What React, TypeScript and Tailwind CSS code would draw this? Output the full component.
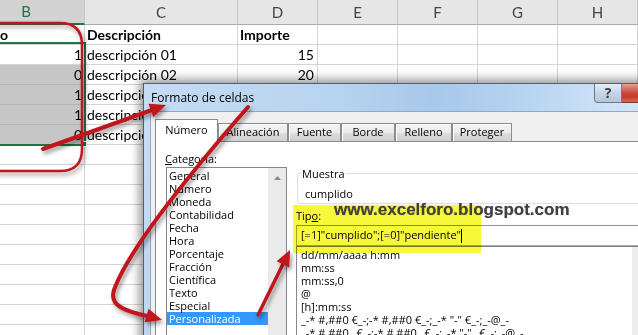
import React from 'react';

const cols = [
  { key: 'B', w: 'w-[117px]' },
  { key: 'C', w: 'w-[153px]' },
  { key: 'D', w: 'w-[80px]' },
  { key: 'E', w: 'w-[80px]' },
  { key: 'F', w: 'w-[80px]' },
  { key: 'G', w: 'w-[80px]' },
  { key: 'H', w: 'w-[80px]' },
  { key: 'I', w: 'w-[80px]' },
];

const rows = [
  { b: 'Cumplido', c: 'Descripción', d: 'Importe', bold: true },
  { b: '1', c: 'descripción 01', d: '15' },
  { b: '0', c: 'descripción 02', d: '20', sel: true },
  { b: '1', c: 'descripción 03', d: '25', sel: true },
  { b: '1', c: 'descripción 04', d: '30', sel: true },
  { b: '0', c: 'descripción 05', d: '35', sel: true },
  ...Array.from({ length: 10 }, () => ({ b: '', c: '', d: '' })),
];

const categories = [
  'General', 'Número', 'Moneda', 'Contabilidad', 'Fecha', 'Hora',
  'Porcentaje', 'Fracción', 'Científica', 'Texto', 'Especial', 'Personalizada',
];

const formats = [
  'dd/mm/aaaa h:mm',
  'mm:ss',
  'mm:ss,0',
  '@',
  '[h]:mm:ss',
  '_-* #,##0 €_-;-* #,##0 €_-;_-* "-" €_-;_-@_-',
  '_-* #,##0 _€_-;-* #,##0 _€_-;_-* "-" _€_-;_-@_-',
];

const tabs = [
  { label: 'Alineación', w: 'w-[70px]' },
  { label: 'Fuente', w: 'w-[53px]' },
  { label: 'Borde', w: 'w-[54px]' },
  { label: 'Relleno', w: 'w-[57px]' },
  { label: 'Proteger', w: 'w-[60px]' },
];

function Sheet() {
  return (
    <div className="ml-[-32px] font-['Lato',sans-serif] text-[14px] text-black">
      {/* column headers */}
      <div className="flex text-[15px]">
        {cols.map((c) => (
          <div
            key={c.key}
            className={`${c.w} shrink-0 h-[25px] flex items-center justify-center border-r border-[#c8c8c8] ${
              c.key === 'B'
                ? 'bg-[#d2d2d2] text-[#217346] border-b-2 border-b-[#217346]'
                : 'bg-[#e6e6e6] text-[#444] border-b border-b-[#ababab]'
            }`}
          >
            {c.key}
          </div>
        ))}
      </div>
      {rows.map((r, i) => (
        <div key={i} className="flex">
          <div
            className={`w-[117px] shrink-0 h-[20px] flex items-center justify-end border-r border-b ${
              r.sel ? 'bg-[#c6c6c6] border-[#b4b4b4]' : 'border-[#d4d4d4]'
            } ${r.bold ? 'font-bold pr-[76px]' : 'pr-[2px]'}`}
          >
            <span className="whitespace-nowrap">{r.b}</span>
          </div>
          <div className={`w-[153px] shrink-0 h-[20px] flex items-center pl-[2px] border-r border-b border-[#d4d4d4] ${r.bold ? 'font-bold' : ''}`}>
            {r.c}
          </div>
          <div
            className={`w-[80px] shrink-0 h-[20px] flex items-center border-r border-b border-[#d4d4d4] ${
              r.bold ? 'font-bold pl-[2px]' : 'justify-end pr-[3px]'
            }`}
          >
            {r.d}
          </div>
          {['E', 'F', 'G', 'H', 'I'].map((k) => (
            <div key={k} className="w-[80px] shrink-0 h-[20px] border-r border-b border-[#d4d4d4]" />
          ))}
        </div>
      ))}
    </div>
  );
}

function Dialog() {
  return (
    <div className="absolute left-[143px] top-[83px] z-10 w-[530px] h-[290px] border border-[#4f6072] bg-[linear-gradient(180deg,#c9def4,#bcd4ee)] shadow-[0_0_10px_3px_rgba(0,0,0,0.45)] font-['Open_Sans',sans-serif] text-[11px] text-black">
      {/* title bar */}
      <div className="h-[27px] flex bg-[linear-gradient(90deg,#c4dcf4_0%,#b9d4ef_35%,#a8c8ea_55%,#b5d2f0_70%,#cfe3f8_90%,#d8e9f9_100%)]">
        <div className="pl-[7px] flex items-center text-[12px]">Formato de celdas</div>
        <div className="ml-[340px] flex self-start">
          <div className="w-[28px] h-[19px] flex items-center justify-center rounded-bl-[4px] border border-t-0 border-[#6b7c8f] bg-[linear-gradient(180deg,#e6eef7,#c6d5e6_50%,#b4c6da)] text-[14px] font-bold text-[#3a3a3a] leading-none">
            ?
          </div>
          <div className="w-[44px] h-[19px] flex items-center justify-center border border-t-0 border-l-0 border-[#6b3a32] bg-[linear-gradient(180deg,#e4a08f,#c9493a_50%,#c53b2a_70%,#d86a52)] text-white text-[13px] font-bold">
            ✕
          </div>
        </div>
      </div>
      {/* body */}
      <div className="ml-[6px] h-full border-l border-t border-[#94a8bd] bg-[#f0f0f0] pl-[4px] pt-[7px]">
        <div className="flex items-end h-[22px]">
          <div className="w-[63px] h-[23px] mb-[-1px] relative z-10 flex items-center justify-center bg-white border border-b-0 border-[#898c95] pb-[2px]">
            Número
          </div>
          {tabs.map((t) => (
            <div
              key={t.label}
              className={`${t.w} h-[18px] flex items-center justify-center border border-b-0 border-[#898c95] bg-[linear-gradient(180deg,#f4f4f4,#ebebeb_50%,#dddddd_51%,#cfcfcf)] shadow-[inset_1px_1px_0_#ffffff]`}
            >
              {t.label}
            </div>
          ))}
        </div>
        <div className="h-full border-t border-l border-[#898c95] bg-white flex pl-[9px] pt-[9px]">
          {/* category column */}
          <div className="flex flex-col w-[122px] shrink-0">
            <div className="h-[15px] leading-[15px]">
              <span className="underline">C</span>ategoría:
            </div>
            <div className="mt-[1px] ml-[1px] w-[121px] h-[200px] border border-[#828790] flex">
              <div className="w-[101px] pt-[1px]">
                {categories.map((c) => (
                  <div
                    key={c}
                    className={`h-[13px] leading-[13px] pl-[2px] ${c === 'Personalizada' ? 'bg-[#3399ff] text-white' : ''}`}
                  >
                    {c}
                  </div>
                ))}
              </div>
              <div className="w-[18px] bg-[#eaeaea] flex justify-center pt-[8px]">
                <svg width="7" height="4" viewBox="0 0 7 4">
                  <path d="M0 4 L3.5 0 L7 4 Z" fill="#8a8a8a" />
                </svg>
              </div>
            </div>
          </div>
          {/* right column */}
          <div className="ml-[9px] w-[360px] flex flex-col pt-[15px]">
            <fieldset className="ml-[1px] border border-[#d5dfe5] rounded-[3px] pl-[7px] pt-[5px] pb-[2px]">
              <legend className="ml-[-4px] px-[1px] h-[15px] leading-[15px]">Muestra</legend>
              <div className="h-[15px] leading-[15px]">cumplido</div>
            </fieldset>
            <div className="mt-[4px] h-[15px] leading-[15px]">
              Tip<span className="underline">o</span>:
            </div>
            <div className="mt-[2px] h-[21px] border border-[#abadb3] border-t-[#8e9199] bg-white flex items-center pl-[4px]">
              <span>[=1]"cumplido";[=0]"pendiente"</span>
              <span className="w-[1px] h-[14px] bg-black" />
            </div>
            <div className="h-[120px] border border-[#828790] border-t-[#7a7d85] bg-white flex">
              <div className="w-[335px] pl-[4px] pt-[1px]">
                {formats.map((f) => (
                  <div key={f} className="h-[13px] leading-[13px] whitespace-nowrap">
                    {f}
                  </div>
                ))}
              </div>
              <div className="w-[18px] bg-[#ededed]" />
            </div>
          </div>
        </div>
      </div>
    </div>
  );
}

function Arrows() {
  return (
    <svg className="absolute inset-0 z-40 pointer-events-none" width="638" height="335" viewBox="0 0 638 335">
      <defs>
        <filter id="sh" x="-20%" y="-20%" width="140%" height="140%">
          <feDropShadow dx="2" dy="3" stdDeviation="2" floodColor="#000" floodOpacity="0.4" />
        </filter>
      </defs>
      <g filter="url(#sh)" fill="none" stroke="#c0141c" strokeLinecap="round">
        {/* rounded frame around column B */}
        <path d="M-5 23 L60 23 Q82 23 82 45 L82 149 Q82 171 60 171 L-5 171" strokeWidth="2.5" />
        {/* arrow to title */}
        <path d="M43 149 L152 110" strokeWidth="4" />
        {/* curved arrow to Personalizada */}
        <path d="M248 107 C200 162 130 245 114 290 C109 305 124 311 147 316" strokeWidth="4" />
        {/* arrow to Tipo */}
        <path d="M258 315 L283 264" strokeWidth="3.5" />
      </g>
      <g filter="url(#sh)" fill="#c0141c">
        <path d="M166 105 L153.3 117 L148.5 103.8 Z" />
        <path d="M162 320 L144.6 322.2 L148.6 308.8 Z" />
        <path d="M290 250 L289.2 267.5 L276.6 261.3 Z" />
      </g>
    </svg>
  );
}

export default function App() {
  return (
    <div className="relative w-[638px] h-[335px] overflow-hidden bg-white isolate">
      <Sheet />
      {/* selection frame on column B */}
      <div className="absolute left-[-5px] top-[42px] w-[91px] h-[104px] border-2 border-[#217346]" />
      <div className="absolute left-[81px] top-[141px] w-[6px] h-[6px] bg-[#217346] border border-white" />
      <Dialog />
      {/* highlighter */}
      <div className="absolute left-[293px] top-[205px] z-20 w-[188px] h-[48px] bg-[#f7f73c] mix-blend-multiply" />
      {/* watermark */}
      <div className="absolute left-[334px] top-[201px] z-30 font-['Liberation_Sans',sans-serif] font-bold text-[17px] leading-none text-[#3f3f3f] [text-shadow:0_0_1px_rgba(0,0,0,0.4)]">
        www.excelforo.blogspot.com
      </div>
      <Arrows />
    </div>
  );
}
